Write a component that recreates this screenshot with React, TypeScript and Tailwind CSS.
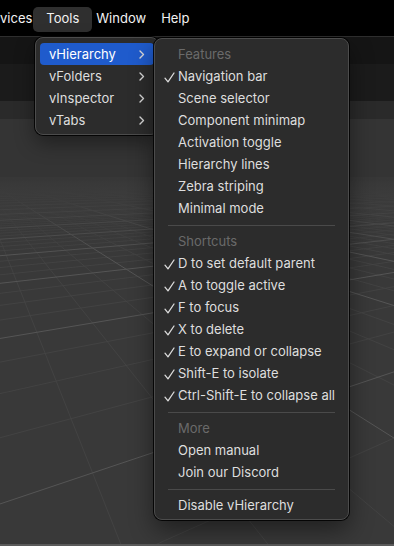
import React from "react";

const FONT = { fontFamily: "Inter, 'Noto Sans', sans-serif" };

type Item =
  | { kind: "header"; label: string }
  | { kind: "item"; label: string; checked?: boolean }
  | { kind: "sep" };

const SUBMENU: Item[] = [
  { kind: "header", label: "Features" },
  { kind: "item", label: "Navigation bar", checked: true },
  { kind: "item", label: "Scene selector" },
  { kind: "item", label: "Component minimap" },
  { kind: "item", label: "Activation toggle" },
  { kind: "item", label: "Hierarchy lines" },
  { kind: "item", label: "Zebra striping" },
  { kind: "item", label: "Minimal mode" },
  { kind: "sep" },
  { kind: "header", label: "Shortcuts" },
  { kind: "item", label: "D to set default parent", checked: true },
  { kind: "item", label: "A to toggle active", checked: true },
  { kind: "item", label: "F to focus", checked: true },
  { kind: "item", label: "X to delete", checked: true },
  { kind: "item", label: "E to expand or collapse", checked: true },
  { kind: "item", label: "Shift-E to isolate", checked: true },
  { kind: "item", label: "Ctrl-Shift-E to collapse all", checked: true },
  { kind: "sep" },
  { kind: "header", label: "More" },
  { kind: "item", label: "Open manual" },
  { kind: "item", label: "Join our Discord" },
  { kind: "sep" },
  { kind: "item", label: "Disable vHierarchy" },
];

const TOOLS = ["vHierarchy", "vFolders", "vInspector", "vTabs"];

// perspective ground grid, like the unity scene view (coords relative to the scene box, which starts at y 119)
const W = 394;
const YH = 54;
const F = 420;
const CAM_H = 1;
const TH = (28 * Math.PI) / 180;
const S = 0.35;

function project(X: number, Z: number) {
  const c = Math.cos(TH);
  const sn = Math.sin(TH);
  const xc = X * c - Z * sn;
  const zc = X * sn + Z * c;
  return [W / 2 + (F * xc) / zc, YH + (F * CAM_H) / zc];
}

function buildLines() {
  const c = Math.cos(TH);
  const sn = Math.sin(TH);
  const zn = 0.5;
  const zf = 50;
  const out: { d: string; major: boolean }[] = [];
  for (let i = -200; i <= 200; i++) {
    const k = i * S;
    const a1 = project(k, (zn - k * sn) / c);
    const a2 = project(k, (zf - k * sn) / c);
    out.push({ d: `M${a1[0].toFixed(1)} ${a1[1].toFixed(1)}L${a2[0].toFixed(1)} ${a2[1].toFixed(1)}`, major: i % 4 === 0 });
    const b1 = project((zn - k * c) / sn, k);
    const b2 = project((zf - k * c) / sn, k);
    out.push({ d: `M${b1[0].toFixed(1)} ${b1[1].toFixed(1)}L${b2[0].toFixed(1)} ${b2[1].toFixed(1)}`, major: i % 4 === 0 });
  }
  return out;
}

const GRID = buildLines();

function Grid() {
  return (
    <svg className="absolute inset-0" width="394" height="425" viewBox="0 0 394 425">
      <defs>
        <linearGradient id="haze" x1="0" y1="0" x2="0" y2="1">
          <stop offset="0" stopColor="#373737" stopOpacity="1" />
          <stop offset="0.3" stopColor="#383838" stopOpacity="0.8" />
          <stop offset="1" stopColor="#393939" stopOpacity="0" />
        </linearGradient>
      </defs>
      <g fill="none">
        {GRID.filter((l) => !l.major).map((l, i) => (
          <path key={"n" + i} d={l.d} stroke="#454545" strokeWidth="0.8" />
        ))}
        {GRID.filter((l) => l.major).map((l, i) => (
          <path key={"j" + i} d={l.d} stroke="#555555" strokeWidth="1" />
        ))}
      </g>
      <rect x="0" y="0" width="394" height="58" fill="#343434" />
      <rect x="0" y="58" width="394" height="80" fill="url(#haze)" />
    </svg>
  );
}

function Chevron() {
  return (
    <svg width="6" height="9" viewBox="0 0 6 9" className="shrink-0">
      <path d="M1 1l3.5 3.5L1 8" fill="none" stroke="#d8d8d8" strokeWidth="1.4" strokeLinecap="round" strokeLinejoin="round" />
    </svg>
  );
}

function Check() {
  return (
    <svg width="11" height="11" viewBox="0 0 11 11">
      <path d="M1 6.2l3 3.6L10 1" fill="none" stroke="#dcdcdc" strokeWidth="1.3" strokeLinecap="round" strokeLinejoin="round" />
    </svg>
  );
}

export default function App() {
  return (
    <div className="relative flex h-[546px] w-[394px] flex-col overflow-hidden bg-black text-[13px]" style={FONT}>
      {/* ── MENU BAR ─────────────────────────────── */}
      <div className="flex h-[37px] shrink-0 items-center border-b border-[#2e2e2e] bg-black pt-[2px] text-[13px] text-[#f2f2f2]">
        <span>vices</span>
        <span className="ml-[1px] flex h-[25px] items-center rounded-[5px] bg-[#2f2f2f] px-[13px]">Tools</span>
        <span className="ml-[4px]">Window</span>
        <span className="ml-[15px]">Help</span>
      </div>

      {/* ── UNITY BACKGROUND ─────────────────────── */}
      <div className="h-[27px] shrink-0 bg-[#151515]" />
      <div className="h-[37px] shrink-0 bg-[#1b1b1b]" />
      <div className="h-[18px] shrink-0 bg-[#2a2a2a]" />
      <div className="relative flex-1 overflow-hidden bg-[#393939]">
        <Grid />
      </div>
      <div className="h-[2px] shrink-0 bg-[#5a5a5a]" />

      {/* ── TOOLS DROPDOWN ───────────────────────── */}
      <div className="absolute left-[35px] top-[37px] z-10 flex w-[124px] flex-col rounded-[8px] border border-[#4c4c4c] bg-[#2c2c2c] px-[4px] pb-[3px] pt-[5px] shadow-[0_0_0_1px_rgba(0,0,0,0.85),0_8px_20px_rgba(0,0,0,0.4)]">
        {TOOLS.map((t, i) => (
          <div
            key={t}
            className={
              i === 0
                ? "flex h-[22px] w-[114px] items-center justify-between rounded-[4px] bg-[#1f5bcc] pl-[9px] pr-[9px] pt-px text-white"
                : "flex h-[22px] w-[114px] items-center justify-between pl-[9px] pr-[9px] pt-px text-[#dedede]"
            }
          >
            <span>{t}</span>
            <Chevron />
          </div>
        ))}
      </div>

      {/* ── vHIERARCHY SUBMENU ───────────────────── */}
      <div className="absolute left-[154px] top-[38px] z-20 flex w-[195px] flex-col rounded-[8px] border border-[#4c4c4c] bg-[#2c2c2c] pb-[2px] pt-[5px] shadow-[0_0_0_1px_rgba(0,0,0,0.85),0_10px_24px_rgba(0,0,0,0.45)]">
        {SUBMENU.map((it, i) => {
          if (it.kind === "sep")
            return (
              <div key={i} className="flex h-[11px] items-center px-[13px]">
                <div className="h-px w-full bg-[#4a4a4a]" />
              </div>
            );
          if (it.kind === "header")
            return (
              <div key={i} className="flex h-[22px] items-center pl-[23px] text-[#6a6a6a]">
                {it.label}
              </div>
            );
          return (
            <div key={i} className="flex h-[22px] items-center text-[#dedede]">
              <span className="flex w-[23px] justify-end pr-[3px]">{it.checked && <Check />}</span>
              <span>{it.label}</span>
            </div>
          );
        })}
      </div>
    </div>
  );
}
